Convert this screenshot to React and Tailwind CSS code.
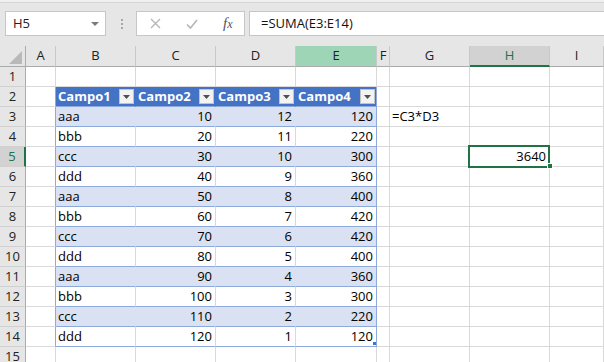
import clsx from "clsx";

const cols = ["A", "B", "C", "D", "E", "F", "G", "H", "I"];

const data = [
  ["aaa", 10, 12, 120],
  ["bbb", 20, 11, 220],
  ["ccc", 30, 10, 300],
  ["ddd", 40, 9, 360],
  ["aaa", 50, 8, 400],
  ["bbb", 60, 7, 420],
  ["ccc", 70, 6, 420],
  ["ddd", 80, 5, 400],
  ["aaa", 90, 4, 360],
  ["bbb", 100, 3, 300],
  ["ccc", 110, 2, 220],
  ["ddd", 120, 1, 120],
];

function FilterButton() {
  return (
    <span className="ml-auto mr-px flex h-[15px] w-[15px] items-center justify-center border border-[#c3c3c3] bg-[#f3f3f3]">
      <svg width="7" height="4" viewBox="0 0 7 4">
        <path d="M0 0h7L3.5 4z" fill="#505050" />
      </svg>
    </span>
  );
}

function Toolbar() {
  return (
    <div className="h-[46px] bg-[#e6e6e6]">
      <div className="h-[3px] border-b border-[#d6d6d6] bg-[#efefef]" />
      <div className="flex items-start pl-[5px] pt-[8px]">
        <div className="flex h-[25px] w-[101px] items-center border border-[#c6c6c6] bg-white pl-[7px] pr-[6px] text-[13px] text-[#222]">
          <span>H5</span>
          <svg className="ml-auto" width="8" height="4" viewBox="0 0 8 4">
            <path d="M0 0h8L4 4z" fill="#7a7a7a" />
          </svg>
        </div>
        <div className="ml-[15px] flex h-[25px] w-[2px] flex-col justify-center gap-[2px]">
          <span className="h-[2px] w-[2px] bg-[#a8a8a8]" />
          <span className="h-[2px] w-[2px] bg-[#a8a8a8]" />
          <span className="h-[2px] w-[2px] bg-[#a8a8a8]" />
        </div>
        <div className="ml-[13px] flex h-[25px] w-[109px] items-center border border-[#c6c6c6] bg-white">
          <svg className="ml-[13px]" width="11" height="11" viewBox="0 0 11 11">
            <path d="M1 1l9 9M10 1l-9 9" stroke="#b4b4b4" strokeWidth="1.3" />
          </svg>
          <svg className="ml-[25px]" width="12" height="10" viewBox="0 0 12 10">
            <path d="M1 5.5l3.5 3.5L11 1" stroke="#b4b4b4" strokeWidth="1.6" fill="none" />
          </svg>
          <span className="ml-[25px] font-['Liberation_Serif',serif] text-[15px] italic text-[#555]">
            f<span className="text-[12px]">x</span>
          </span>
        </div>
        <div className="ml-[4px] flex h-[25px] flex-1 items-center border border-r-0 border-[#c6c6c6] bg-white pl-[11px] text-[13px] text-[#111]">
          =SUMA(E3:E14)
        </div>
      </div>
    </div>
  );
}

function HeaderRow() {
  return (
    <>
      <div className="relative h-[21px] border-b border-r border-[#ababab] bg-[#e6e6e6]">
        <svg className="absolute bottom-[2px] right-[3px]" width="13" height="13" viewBox="0 0 13 13">
          <path d="M13 0V13H0z" fill="#b9b9b9" />
        </svg>
      </div>
      {cols.map((c) => (
        <div
          key={c}
          className={clsx(
            "flex h-[21px] items-center justify-center border-r border-b text-[13px]",
            c === "E" && "border-r-[#c8c8c8] border-b-[#ababab] bg-[#9fd5b7] text-[#222]",
            c === "H" && "border-r-[#c8c8c8] border-b-2 border-b-[#217346] bg-[#d2d2d2] text-[#217346]",
            c !== "E" && c !== "H" && "border-r-[#c8c8c8] border-b-[#ababab] bg-[#e6e6e6] text-[#222]"
          )}
        >
          {c}
        </div>
      ))}
    </>
  );
}

function RowHeader({ n }) {
  const active = n === 5;
  return (
    <div
      className={clsx(
        "flex h-5 items-center justify-center border-b border-b-[#d0d0d0] text-[13px]",
        active ? "border-r-2 border-r-[#217346] bg-[#d2d2d2] text-[#217346]" : "border-r border-r-[#ababab] bg-[#e6e6e6] text-[#222]"
      )}
    >
      {n}
    </div>
  );
}

function Row({ n }) {
  const inTable = n >= 2 && n <= 14;
  const header = n === 2;
  const banded = n >= 3 && n <= 14 && n % 2 === 1;
  const rec = n >= 3 && n <= 14 ? data[n - 3] : null;

  const plain = "h-5 border-b border-r border-b-[#d9d9d9] border-r-[#d9d9d9]";

  return (
    <>
      <RowHeader n={n} />
      {/* A */}
      <div className={clsx("h-5 border-b border-r border-b-[#d9d9d9]", inTable ? "border-r-[#8ea9db]" : "border-r-[#d9d9d9]")} />
      {/* B..E */}
      {[0, 1, 2, 3].map((i) => {
        if (header) {
          return (
            <div
              key={i}
              className={clsx(
                "flex h-5 items-center border-b border-r border-b-[#8ea9db] bg-[#4472c4] pl-[2px] text-[13px] font-bold text-white",
                i === 3 ? "border-r-[#8ea9db]" : "border-r-[#4472c4]"
              )}
            >
              <span>Campo{i + 1}</span>
              <FilterButton />
            </div>
          );
        }
        if (rec) {
          return (
            <div
              key={i}
              className={clsx(
                "relative flex h-5 items-center border-b border-r border-b-[#8ea9db] text-[13px] text-black",
                banded ? "bg-[#d9e1f2]" : "bg-white",
                i === 3 ? "border-r-[#8ea9db]" : banded ? "border-r-[#d9e1f2]" : "border-r-[#d9d9d9]",
                i === 0 ? "pl-[2px]" : "justify-end pr-[3px]"
              )}
            >
              {rec[i]}
              {n === 14 && i === 3 && <span className="absolute bottom-[1px] right-0 h-[3px] w-[3px] bg-[#4472c4]" />}
            </div>
          );
        }
        return <div key={i} className={plain} />;
      })}
      {/* F */}
      <div className={plain} />
      {/* G */}
      <div className={clsx(plain, "flex items-center pl-[2px] text-[13px] text-black")}>{n === 3 ? "=C3*D3" : ""}</div>
      {/* H */}
      {n === 5 ? (
        <div className={clsx(plain, "relative flex items-center justify-end pr-[3px] text-[13px] text-black")}>
          3640
          <span className="absolute -left-[2px] -top-[2px] h-[23px] w-[82px] border-2 border-[#217346]" />
          <span className="absolute -bottom-[3px] -right-[4px] h-[6px] w-[6px] border border-white bg-[#217346]" />
        </div>
      ) : (
        <div className={plain} />
      )}
      {/* I */}
      <div className={plain} />
    </>
  );
}

export default function App() {
  const rows = Array.from({ length: 15 }, (_, i) => i + 1);
  return (
    <div className="h-[362px] w-[604px] overflow-hidden bg-white font-['Open_Sans',sans-serif]">
      <Toolbar />
      <div className="grid grid-cols-[26px_30px_80px_80px_80px_81px_13px_80px_80px_1fr]">
        <HeaderRow />
        {rows.map((n) => (
          <Row key={n} n={n} />
        ))}
      </div>
    </div>
  );
}
